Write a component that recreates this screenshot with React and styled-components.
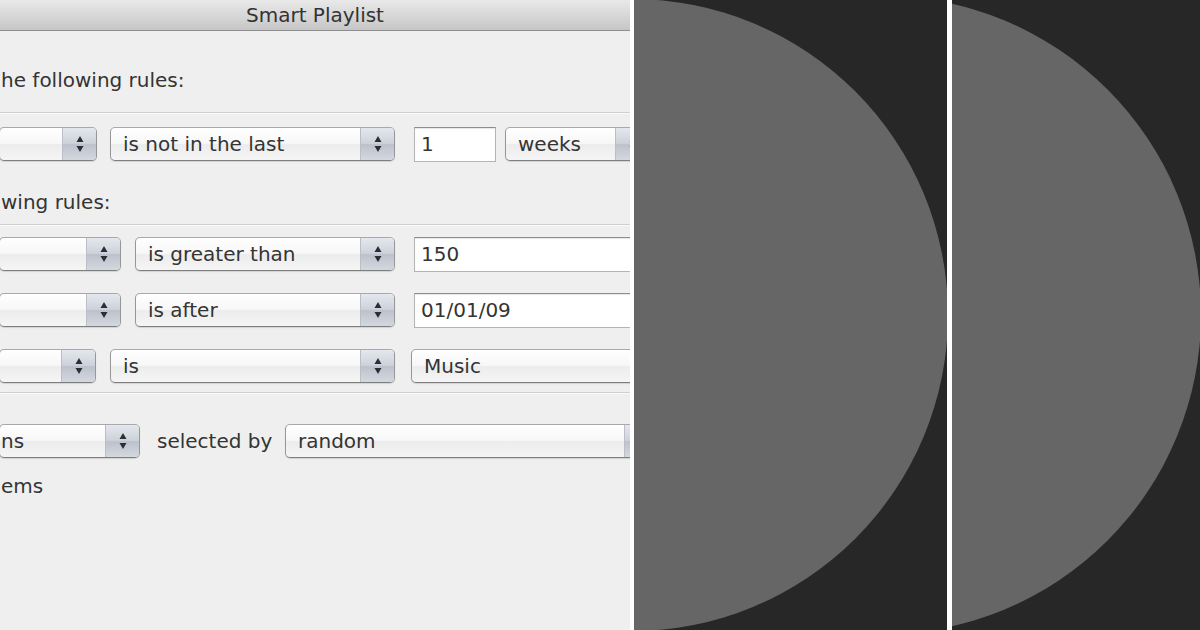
import React from "react";
import styled, { createGlobalStyle } from "styled-components";

const GlobalStyle = createGlobalStyle`
  html, body {
    margin: 0;
    padding: 0;
    background: #ffffff;
  }
  body {
    font-family: "DejaVu Sans", "Liberation Sans", sans-serif;
  }
`;

const Page = styled.div`
  display: flex;
  width: 1200px;
  height: 630px;
  overflow: hidden;
  background: #ffffff;
`;

const Dialog = styled.div`
  width: 630px;
  height: 630px;
  flex-shrink: 0;
  overflow: hidden;
  display: flex;
  flex-direction: column;
  background: #efefef;
  color: #343434;
  font-size: 20px;
`;

const TitleBar = styled.div`
  height: 30px;
  flex-shrink: 0;
  display: flex;
  align-items: center;
  justify-content: center;
  background: linear-gradient(#e9e9e9, #d6d6d6 55%, #c6c6c6);
  border-bottom: 1px solid #8e8e8e;
  font-size: 20px;
  color: #333333;
`;

const Label = styled.div`
  height: 24px;
  line-height: 24px;
  margin-top: ${(p) => p.$mt}px;
  white-space: nowrap;
  padding-left: 1px;
`;

const Rule = styled.div`
  height: 1px;
  margin-top: ${(p) => p.$mt}px;
  background: #cfcfcf;
  border-bottom: 1px solid #fafafa;
  flex-shrink: 0;
`;

const Row = styled.div`
  display: flex;
  align-items: center;
  height: 34px;
  margin-top: ${(p) => p.$mt}px;
  flex-shrink: 0;
`;

const Select = styled.div`
  display: flex;
  align-items: stretch;
  flex-shrink: 0;
  box-sizing: border-box;
  width: ${(p) => p.$w}px;
  height: 34px;
  margin-left: ${(p) => p.$ml || 0}px;
  border: 1px solid #979797;
  border-top-color: #a9a9a9;
  border-bottom-color: #7e7e7e;
  border-radius: 5px;
  background: linear-gradient(#ffffff, #f7f7f7 48%, #ececec 52%, #f5f5f5);
  box-shadow: 0 1px 1px rgba(0, 0, 0, 0.12);
  overflow: hidden;
`;

const SelectText = styled.span`
  flex: 1;
  display: flex;
  align-items: center;
  padding-left: ${(p) => (p.$pl === undefined ? 12 : p.$pl)}px;
  white-space: nowrap;
  overflow: hidden;
`;

const Stepper = styled.span`
  width: 33px;
  flex-shrink: 0;
  display: flex;
  align-items: center;
  justify-content: center;
  border-left: 1px solid #b9bec7;
  background: linear-gradient(#e4e7ed, #cdd2da 48%, #bcc2cc 52%, #d4d8df);
`;

const TextField = styled.div`
  display: flex;
  align-items: center;
  flex-shrink: 0;
  box-sizing: border-box;
  width: ${(p) => p.$w}px;
  height: 35px;
  margin-left: ${(p) => p.$ml || 0}px;
  padding-left: 6px;
  background: #ffffff;
  border: 1px solid #b4b4b4;
  border-top-color: #8d8d8d;
  box-shadow: inset 0 1px 1px rgba(0, 0, 0, 0.1);
  white-space: nowrap;
`;

const InlineLabel = styled.span`
  flex-shrink: 0;
  width: ${(p) => p.$w}px;
  margin-left: ${(p) => p.$ml || 0}px;
  white-space: nowrap;
`;

const Panel = styled.div`
  flex-shrink: 0;
  width: ${(p) => p.$w}px;
  height: 630px;
  margin-left: ${(p) => p.$ml}px;
  background: #272727;
  overflow: hidden;
`;

const Disc = styled.svg`
  display: block;
  width: 100%;
  height: 100%;
`;

const Arrows = () => (
  <svg width="10" height="20" viewBox="0 0 10 20">
    <path d="M5 2 L8.5 8 L1.5 8 Z" fill="#2b2f35" />
    <path d="M5 18 L8.5 12 L1.5 12 Z" fill="#2b2f35" />
  </svg>
);

const PopUp = ({ w, ml, text, pl, stepper = true }) => (
  <Select $w={w} $ml={ml}>
    <SelectText $pl={pl}>{text}</SelectText>
    {stepper && (
      <Stepper>
        <Arrows />
      </Stepper>
    )}
  </Select>
);

const HalfDisc = ({ w, ml, cx, r }) => (
  <Panel $w={w} $ml={ml}>
    <Disc viewBox={`0 0 ${w} 630`} preserveAspectRatio="none">
      <circle cx={cx} cy="315" r={r} fill="#666666" />
    </Disc>
  </Panel>
);

const App = () => (
  <>
    <GlobalStyle />
    <Page>
      <Dialog>
        <TitleBar>Smart Playlist</TitleBar>
        <Label $mt={37}>he following rules:</Label>
        <Rule $mt={20} />
        <Row $mt={13}>
          <PopUp w={98} ml={-1} text="" />
          <PopUp w={285} ml={13} text="is not in the last" />
          <TextField $w={82} $ml={19}>1</TextField>
          <PopUp w={145} ml={9} text="weeks" />
        </Row>
        <Label $mt={29}>wing rules:</Label>
        <Rule $mt={10} />
        <Row $mt={11}>
          <PopUp w={122} ml={-1} text="" />
          <PopUp w={260} ml={14} text="is greater than" />
          <TextField $w={260} $ml={19}>150</TextField>
        </Row>
        <Row $mt={22}>
          <PopUp w={122} ml={-1} text="" />
          <PopUp w={260} ml={14} text="is after" />
          <TextField $w={260} $ml={19}>01/01/09</TextField>
        </Row>
        <Row $mt={22}>
          <PopUp w={97} ml={-1} text="" />
          <PopUp w={285} ml={14} text="is" />
          <PopUp w={260} ml={16} text="Music" stepper={false} />
        </Row>
        <Rule $mt={9} />
        <Row $mt={30}>
          <PopUp w={141} ml={-1} text="ns" pl={1} />
          <InlineLabel $w={128} $ml={17}>selected by</InlineLabel>
          <PopUp w={374} text="random" />
        </Row>
        <Label $mt={16}>ems</Label>
      </Dialog>
      <HalfDisc w={313} ml={4} cx={-2} r={316} />
      <HalfDisc w={248} ml={5} cx={-70} r={319} />
    </Page>
  </>
);

export default App;
